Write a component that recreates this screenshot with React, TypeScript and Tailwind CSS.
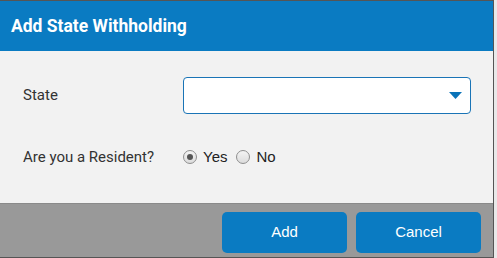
import React from "react";

export default function App() {
  return (
    <div className="w-[497px] h-[258px] bg-[#e9e9e9] flex">
      <div className="w-[494px] h-[258px] flex flex-col border-t border-b border-r border-[#555]">
        <div className="h-[50px] bg-[#0a7bc2] flex items-center pl-[11px]">
          <span className="text-white text-[17.5px] font-bold" style={{ fontFamily: "Roboto, sans-serif" }}>
            Add State Withholding
          </span>
        </div>
        <div className="h-[152px] bg-[#f2f2f2] flex flex-col pl-[23px] pt-[26px]" style={{ fontFamily: "Roboto, sans-serif" }}>
          <div className="flex items-center h-[37px]">
            <span className="w-[160px] text-[15px] text-[#333]">State</span>
            <div className="w-[288px] h-[37px] bg-white border border-[#1a74b6] rounded-[4px] flex items-center justify-end pr-[8px]">
              <svg width="13" height="7" viewBox="0 0 13 7">
                <path d="M0 0H13L6.5 7Z" fill="#0a73b8" />
              </svg>
            </div>
          </div>
          <div className="flex items-center mt-[35px] h-[16px]">
            <span className="w-[160px] text-[15px] text-[#333]">Are you a Resident?</span>
            <div className="flex items-center text-[15px] text-[#222]" style={{ fontFamily: '"Liberation Sans", Arial, sans-serif' }}>
              <span className="w-[14px] h-[14px] rounded-full border border-[#8f8f8f] bg-gradient-to-b from-[#f4f4f4] to-[#dcdcdc] flex items-center justify-center">
                <span className="w-[6px] h-[6px] rounded-full bg-[#555]" />
              </span>
              <span className="ml-[6px]">Yes</span>
              <span className="ml-[9px] w-[14px] h-[14px] rounded-full border border-[#8f8f8f] bg-gradient-to-b from-[#f4f4f4] to-[#dcdcdc]" />
              <span className="ml-[6px]">No</span>
            </div>
          </div>
        </div>
        <div className="flex-1 bg-[#999999] border-t border-[#8a8a8a] flex justify-end items-start pt-[8px] pr-[12px] gap-[9px]" style={{ fontFamily: '"Liberation Sans", Arial, sans-serif' }}>
          <button className="w-[125px] h-[41px] bg-[#0a7bc2] rounded-[5px] text-white text-[15px]">Add</button>
          <button className="w-[125px] h-[41px] bg-[#0a7bc2] rounded-[5px] text-white text-[15px]">Cancel</button>
        </div>
      </div>
    </div>
  );
}
